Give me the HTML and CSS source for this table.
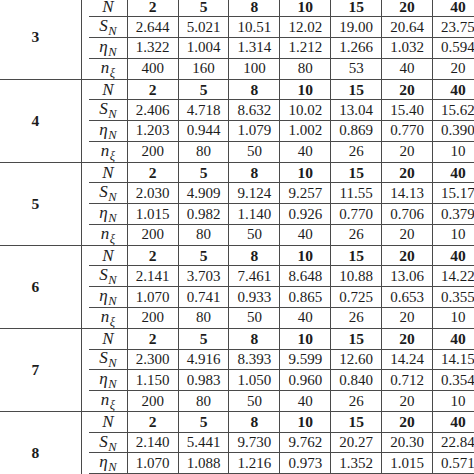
FILE: index.html
```html
<!DOCTYPE html>
<html>
<head>
<meta charset="utf-8">
<link rel="stylesheet" href="styles.css">
</head>
<body>
<div class="table">
  <div class="group">
    <div class="glabel">3</div>
    <div class="rows">
      <div class="row bold"><div class="var"><span class="m"><i>N</i></span></div><div>2</div><div>5</div><div>8</div><div>10</div><div>15</div><div>20</div><div>40</div></div>
      <div class="row"><div class="var"><span class="m"><i>S</i><sub><i>N</i></sub></span></div><div>2.644</div><div>5.021</div><div>10.51</div><div>12.02</div><div>19.00</div><div>20.64</div><div>23.75</div></div>
      <div class="row"><div class="var"><span class="m"><i>η</i><sub><i>N</i></sub></span></div><div>1.322</div><div>1.004</div><div>1.314</div><div>1.212</div><div>1.266</div><div>1.032</div><div>0.594</div></div>
      <div class="row"><div class="var"><span class="m"><i>n</i><sub><i>ξ</i></sub></span></div><div>400</div><div>160</div><div>100</div><div>80</div><div>53</div><div>40</div><div>20</div></div>
    </div>
  </div>
  <div class="group">
    <div class="glabel">4</div>
    <div class="rows">
      <div class="row bold"><div class="var"><span class="m"><i>N</i></span></div><div>2</div><div>5</div><div>8</div><div>10</div><div>15</div><div>20</div><div>40</div></div>
      <div class="row"><div class="var"><span class="m"><i>S</i><sub><i>N</i></sub></span></div><div>2.406</div><div>4.718</div><div>8.632</div><div>10.02</div><div>13.04</div><div>15.40</div><div>15.62</div></div>
      <div class="row"><div class="var"><span class="m"><i>η</i><sub><i>N</i></sub></span></div><div>1.203</div><div>0.944</div><div>1.079</div><div>1.002</div><div>0.869</div><div>0.770</div><div>0.390</div></div>
      <div class="row"><div class="var"><span class="m"><i>n</i><sub><i>ξ</i></sub></span></div><div>200</div><div>80</div><div>50</div><div>40</div><div>26</div><div>20</div><div>10</div></div>
    </div>
  </div>
  <div class="group">
    <div class="glabel">5</div>
    <div class="rows">
      <div class="row bold"><div class="var"><span class="m"><i>N</i></span></div><div>2</div><div>5</div><div>8</div><div>10</div><div>15</div><div>20</div><div>40</div></div>
      <div class="row"><div class="var"><span class="m"><i>S</i><sub><i>N</i></sub></span></div><div>2.030</div><div>4.909</div><div>9.124</div><div>9.257</div><div>11.55</div><div>14.13</div><div>15.17</div></div>
      <div class="row"><div class="var"><span class="m"><i>η</i><sub><i>N</i></sub></span></div><div>1.015</div><div>0.982</div><div>1.140</div><div>0.926</div><div>0.770</div><div>0.706</div><div>0.379</div></div>
      <div class="row"><div class="var"><span class="m"><i>n</i><sub><i>ξ</i></sub></span></div><div>200</div><div>80</div><div>50</div><div>40</div><div>26</div><div>20</div><div>10</div></div>
    </div>
  </div>
  <div class="group">
    <div class="glabel">6</div>
    <div class="rows">
      <div class="row bold"><div class="var"><span class="m"><i>N</i></span></div><div>2</div><div>5</div><div>8</div><div>10</div><div>15</div><div>20</div><div>40</div></div>
      <div class="row"><div class="var"><span class="m"><i>S</i><sub><i>N</i></sub></span></div><div>2.141</div><div>3.703</div><div>7.461</div><div>8.648</div><div>10.88</div><div>13.06</div><div>14.22</div></div>
      <div class="row"><div class="var"><span class="m"><i>η</i><sub><i>N</i></sub></span></div><div>1.070</div><div>0.741</div><div>0.933</div><div>0.865</div><div>0.725</div><div>0.653</div><div>0.355</div></div>
      <div class="row"><div class="var"><span class="m"><i>n</i><sub><i>ξ</i></sub></span></div><div>200</div><div>80</div><div>50</div><div>40</div><div>26</div><div>20</div><div>10</div></div>
    </div>
  </div>
  <div class="group">
    <div class="glabel">7</div>
    <div class="rows">
      <div class="row bold"><div class="var"><span class="m"><i>N</i></span></div><div>2</div><div>5</div><div>8</div><div>10</div><div>15</div><div>20</div><div>40</div></div>
      <div class="row"><div class="var"><span class="m"><i>S</i><sub><i>N</i></sub></span></div><div>2.300</div><div>4.916</div><div>8.393</div><div>9.599</div><div>12.60</div><div>14.24</div><div>14.15</div></div>
      <div class="row"><div class="var"><span class="m"><i>η</i><sub><i>N</i></sub></span></div><div>1.150</div><div>0.983</div><div>1.050</div><div>0.960</div><div>0.840</div><div>0.712</div><div>0.354</div></div>
      <div class="row"><div class="var"><span class="m"><i>n</i><sub><i>ξ</i></sub></span></div><div>200</div><div>80</div><div>50</div><div>40</div><div>26</div><div>20</div><div>10</div></div>
    </div>
  </div>
  <div class="group">
    <div class="glabel">8</div>
    <div class="rows">
      <div class="row bold"><div class="var"><span class="m"><i>N</i></span></div><div>2</div><div>5</div><div>8</div><div>10</div><div>15</div><div>20</div><div>40</div></div>
      <div class="row"><div class="var"><span class="m"><i>S</i><sub><i>N</i></sub></span></div><div>2.140</div><div>5.441</div><div>9.730</div><div>9.762</div><div>20.27</div><div>20.30</div><div>22.84</div></div>
      <div class="row"><div class="var"><span class="m"><i>η</i><sub><i>N</i></sub></span></div><div>1.070</div><div>1.088</div><div>1.216</div><div>0.973</div><div>1.352</div><div>1.015</div><div>0.571</div></div>
      <div class="row"><div class="var"><span class="m"><i>n</i><sub><i>ξ</i></sub></span></div><div>200</div><div>80</div><div>50</div><div>40</div><div>26</div><div>20</div><div>10</div></div>
    </div>
  </div>
</div>
</body>
</html>
```

FILE: styles.css
```css
html, body {
  margin: 0;
  padding: 0;
  background: #fff;
  overflow: hidden;
  width: 474px;
  height: 474px;
}
.table {
  margin-top: -3.6px;
  width: 490px;
  font-family: "Liberation Serif", "DejaVu Serif", serif;
  font-size: 15px;
  color: #1c1c1c;
}
.group {
  display: flex;
  height: 83.1px;
  box-sizing: border-box;
  border-bottom: 1px solid #4a4a4a;
}
.glabel {
  width: 81.5px;
  box-sizing: border-box;
  border-right: 1px solid #4a4a4a;
  display: flex;
  align-items: center;
  justify-content: center;
  padding-right: 10px;
  font-weight: bold;
  font-size: 15.5px;
}
.rows {
  margin-left: 7.5px;
  display: flex;
  flex-direction: column;
  flex: 1;
  min-height: 0;
}
.row {
  flex: 1 1 0;
  min-height: 0;
  display: grid;
  grid-template-columns: 37.7px repeat(7, 50.9px);
  grid-template-rows: 100%;
  box-sizing: border-box;
  border-bottom: 1px solid #4a4a4a;
}
.row:last-child {
  border-bottom: none;
}
.row > div {
  display: flex;
  align-items: center;
  justify-content: center;
  border-left: 1px solid #4a4a4a;
  white-space: nowrap;
  line-height: 1;
  min-height: 0;
  overflow: visible;
}
.row > div.var {
  border-left: none;
  font-size: 17px;
  padding-bottom: 3px;
  box-sizing: border-box;
}
.row.bold > div {
  font-weight: bold;
  font-size: 15.5px;
}
.row.bold > div.var {
  font-weight: normal;
  font-size: 17px;
  padding-bottom: 0;
}
.m {
  display: inline-block;
  line-height: 1;
}
.var sub {
  font-size: 12.5px;
  vertical-align: -4px;
  line-height: 0;
  margin-left: 0.5px;
}
.var i {
  font-style: italic;
}
```
